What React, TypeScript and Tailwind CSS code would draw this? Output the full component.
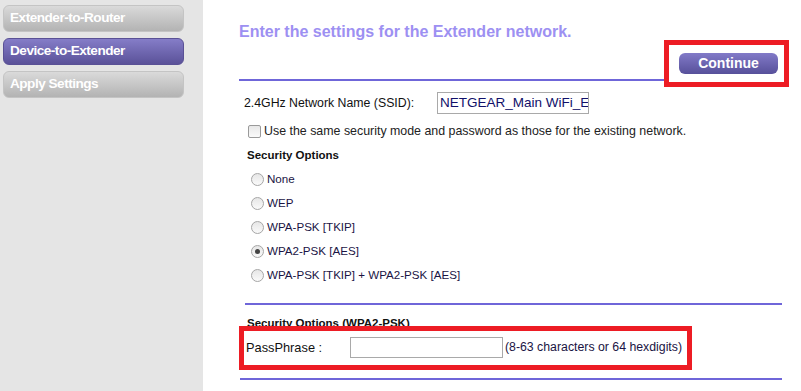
import React from 'react';

const font = { fontFamily: '"Liberation Sans", Arial, sans-serif' };

const steps = [
  { label: 'Extender-to-Router', active: false },
  { label: 'Device-to-Extender', active: true },
  { label: 'Apply Settings', active: false },
];

const options = ['None', 'WEP', 'WPA-PSK [TKIP]', 'WPA2-PSK [AES]', 'WPA-PSK [TKIP] + WPA2-PSK [AES]'];

const Radio: React.FC<{ checked?: boolean }> = ({ checked }) => (
  <span className="w-[13px] h-[13px] rounded-full border border-[#a6a6a6] bg-gradient-to-b from-[#e6e6e6] to-[#fafafa] flex items-center justify-center shrink-0">
    {checked && <span className="w-[5px] h-[5px] rounded-full bg-[#444]" />}
  </span>
);

const App: React.FC = () => {
  return (
    <div className="relative w-[801px] h-[391px] bg-white flex overflow-hidden" style={font}>
      <div className="w-[203px] bg-[#e5e5e5] flex flex-col gap-[6px] pt-[5px] pl-[3px]">
        {steps.map((s) => (
          <div
            key={s.label}
            className={`w-[181px] h-[27px] rounded-[6px] border flex items-center pl-[6px] text-[13.6px] tracking-[-0.5px] font-bold text-white ${
              s.active
                ? 'bg-gradient-to-b from-[#857dc8] to-[#5b5299] border-[#5a5196]'
                : 'bg-gradient-to-b from-[#dadada] to-[#b3b3b3] border-[#c4c4c4]'
            }`}
          >
            {s.label}
          </div>
        ))}
      </div>

      <div className="w-[543px] ml-[36px] flex flex-col">
        <div className="h-[41px] pt-[22px] text-[16px] font-bold text-[#9d90f2] leading-[19px]">
          Enter the settings for the Extender network.
        </div>
        <div className="flex justify-end pr-[4px] mt-[12px]">
          <div className="w-[99px] h-[21px] rounded-[6px] bg-gradient-to-b from-[#827ac8] to-[#57509a] text-white font-bold text-[14px] flex items-center justify-center">
            Continue
          </div>
        </div>
        <div className="h-[2px] w-[425px] bg-[#6f66d9] mt-[5px]" />

        <div className="flex items-center h-[22px] mt-[11px] pl-[5px] text-[12.3px] text-[#111]">
          <span className="w-[193px]">2.4GHz Network Name (SSID):</span>
          <div className="w-[152px] h-[22px] border border-[#a9a9a9] px-[2px] text-[13.5px] leading-[20px] text-[#10106a] overflow-hidden whitespace-nowrap">
            NETGEAR_Main WiFi_EX
          </div>
        </div>

        <div className="flex items-center h-[16px] gap-[3px] mt-[9px] pl-[9px] text-[12.4px] text-[#222]">
          <span className="w-[13px] h-[13px] rounded-[2px] border border-[#9a9a9a] bg-gradient-to-b from-[#e8e8e8] to-[#fafafa]" />
          <span>Use the same security mode and password as those for the existing network.</span>
        </div>

        <div className="flex items-center h-[16px] mt-[9px] pl-[8px] text-[11.5px] font-bold text-[#111]">
          Security Options
        </div>

        <div className="flex flex-col mt-[3px] pl-[12px]">
          {options.map((o) => (
            <div key={o} className="flex items-center gap-[3px] h-[24px] text-[11.6px] text-[#1a1444]">
              <Radio checked={o === 'WPA2-PSK [AES]'} />
              <span>{o}</span>
            </div>
          ))}
        </div>

        <div className="h-[2px] bg-[#6f66d9] mt-[16px] ml-[6px]" />

        <div className="flex items-center h-[16px] mt-[11px] pl-[8px] text-[11.5px] font-bold text-[#111]">
          Security Options (WPA2-PSK)
        </div>

        <div className="flex items-center h-[21px] mt-[5px] pl-[7px] text-[12.8px] text-[#111]">
          <span className="w-[104px]">PassPhrase :</span>
          <div className="w-[153px] h-[21px] border border-[#a9a9a9]" />
          <span className="ml-[2px] text-[12.3px] text-[#1a1444]">(8-63 characters or 64 hexdigits)</span>
        </div>

        <div className="h-[2px] bg-[#6f66d9] mt-[20px] ml-[1px]" />
      </div>

      <div className="absolute left-[664px] top-[40px] w-[125px] h-[47px] border-[5px] border-[#ed1c24]" />
      <div className="absolute left-[239px] top-[326px] w-[453px] h-[44px] border-[5px] border-[#ed1c24]" />
    </div>
  );
};

export default App;
